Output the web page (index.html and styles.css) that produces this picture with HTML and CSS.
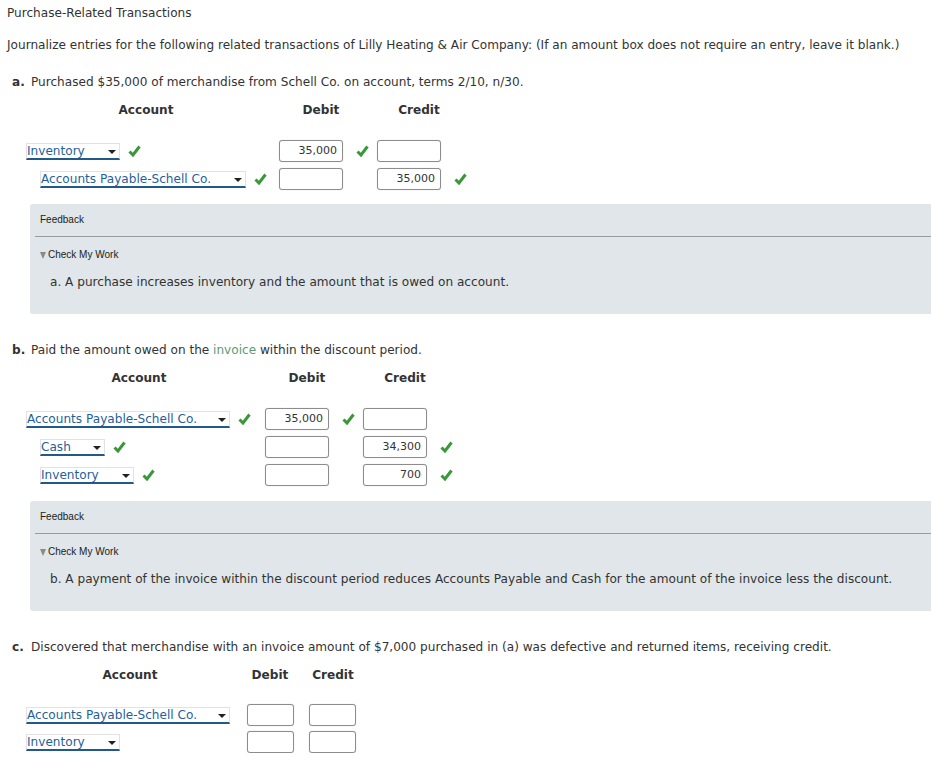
FILE: index.html
```html
<!DOCTYPE html>
<html>
<head>
<meta charset="utf-8">
<link rel="stylesheet" href="styles.css">
</head>
<body>
<div class="page">
  <div class="title">Purchase-Related Transactions</div>
  <div class="instr">Journalize entries for the following related transactions of Lilly Heating &amp; Air Company: (If an amount box does not require an entry, leave it blank.)</div>

  <!-- a -->
  <div class="question q-first"><b>a.</b><span>Purchased $35,000 of merchandise from Schell Co. on account, terms 2/10, n/30.</span></div>
  <div class="head head-a"><div>Account</div><div>Debit</div><div>Credit</div></div>
  <div class="entries entries-a">
    <div class="row">
      <div class="acct"><span class="sel w94">Inventory<i class="arr"></i></span><svg class="chk" viewBox="0 0 13 12"><path d="M1.5 6.5 L5 10 L11.5 1.5"/></svg></div>
      <div class="amt"><span class="box">35,000</span><svg class="chk" viewBox="0 0 13 12"><path d="M1.5 6.5 L5 10 L11.5 1.5"/></svg></div>
      <div class="amt"><span class="box"></span></div>
    </div>
    <div class="row">
      <div class="acct ind"><span class="sel w206">Accounts Payable-Schell Co.<i class="arr"></i></span><svg class="chk" viewBox="0 0 13 12"><path d="M1.5 6.5 L5 10 L11.5 1.5"/></svg></div>
      <div class="amt"><span class="box"></span></div>
      <div class="amt"><span class="box">35,000</span><svg class="chk" viewBox="0 0 13 12"><path d="M1.5 6.5 L5 10 L11.5 1.5"/></svg></div>
    </div>
  </div>
  <div class="feedback">
    <div class="fb-label">Feedback</div>
    <div class="fb-rule"></div>
    <div class="fb-check"><span class="tri"></span>Check My Work</div>
    <div class="fb-text">a. A purchase increases inventory and the amount that is owed on account.</div>
  </div>

  <!-- b -->
  <div class="question"><b>b.</b><span>Paid the amount owed on the <span class="link">invoice</span> within the discount period.</span></div>
  <div class="head head-b"><div>Account</div><div>Debit</div><div>Credit</div></div>
  <div class="entries entries-b">
    <div class="row">
      <div class="acct"><span class="sel w204">Accounts Payable-Schell Co.<i class="arr"></i></span><svg class="chk" viewBox="0 0 13 12"><path d="M1.5 6.5 L5 10 L11.5 1.5"/></svg></div>
      <div class="amt"><span class="box">35,000</span><svg class="chk" viewBox="0 0 13 12"><path d="M1.5 6.5 L5 10 L11.5 1.5"/></svg></div>
      <div class="amt"><span class="box"></span></div>
    </div>
    <div class="row">
      <div class="acct ind"><span class="sel w65">Cash<i class="arr"></i></span><svg class="chk" viewBox="0 0 13 12"><path d="M1.5 6.5 L5 10 L11.5 1.5"/></svg></div>
      <div class="amt"><span class="box"></span></div>
      <div class="amt"><span class="box">34,300</span><svg class="chk" viewBox="0 0 13 12"><path d="M1.5 6.5 L5 10 L11.5 1.5"/></svg></div>
    </div>
    <div class="row">
      <div class="acct ind"><span class="sel w94">Inventory<i class="arr"></i></span><svg class="chk" viewBox="0 0 13 12"><path d="M1.5 6.5 L5 10 L11.5 1.5"/></svg></div>
      <div class="amt"><span class="box"></span></div>
      <div class="amt"><span class="box">700</span><svg class="chk" viewBox="0 0 13 12"><path d="M1.5 6.5 L5 10 L11.5 1.5"/></svg></div>
    </div>
  </div>
  <div class="feedback fb-b">
    <div class="fb-label">Feedback</div>
    <div class="fb-rule"></div>
    <div class="fb-check"><span class="tri"></span>Check My Work</div>
    <div class="fb-text">b. A payment of the invoice within the discount period reduces Accounts Payable and Cash for the amount of the invoice less the discount.</div>
  </div>

  <!-- c -->
  <div class="question"><b>c.</b><span>Discovered that merchandise with an invoice amount of $7,000 purchased in (a) was defective and returned items, receiving credit.</span></div>
  <div class="head head-c"><div>Account</div><div>Debit</div><div>Credit</div></div>
  <div class="entries entries-c">
    <div class="row">
      <div class="acct"><span class="sel w204">Accounts Payable-Schell Co.<i class="arr"></i></span></div>
      <div class="amt"><span class="box"></span></div>
      <div class="amt"><span class="box"></span></div>
    </div>
    <div class="row">
      <div class="acct"><span class="sel w94">Inventory<i class="arr"></i></span></div>
      <div class="amt"><span class="box"></span></div>
      <div class="amt"><span class="box"></span></div>
    </div>
  </div>
</div>
</body>
</html>
```

FILE: styles.css
```css
* { box-sizing: border-box; }
html, body { margin: 0; padding: 0; background: #fff; }
body {
  font-family: Verdana, "DejaVu Sans", sans-serif;
  font-size: 12.1px;
  color: #333;
  line-height: 16px;
}
.page { padding: 5px 0 0 7px; }
.title { height: 16px; }
.instr { margin-top: 16px; white-space: nowrap; }
.question { margin-top: 28px; padding-left: 5px; display: flex; white-space: nowrap; }
.question.q-first { margin-top: 21px; }
.question b { font-weight: bold; width: 19px; }
.link { color: #5c9a74; }

.head { display: grid; margin-top: 12px; font-weight: bold; text-align: center; margin-left: 19px; }
.head-a { grid-template-columns: 240px 110px 86px; }
.head-b { grid-template-columns: 226px 110px 86px; }
.head-c { grid-template-columns: 208px 72px 54px; }

.entries { margin-left: 19px; margin-top: 22px; display: flex; flex-direction: column; gap: 6px; }
.entries-c { margin-top: 21px; gap: 5px; }
.row { display: grid; height: 22px; align-items: center; }
.entries-a .row { grid-template-columns: 253px 98px 100px; }
.entries-b .row { grid-template-columns: 239px 98px 100px; }
.entries-c .row { grid-template-columns: 221px 62px 60px; }

.acct { display: flex; align-items: center; gap: 8px; }
.acct.ind { padding-left: 14px; }
.amt { display: flex; align-items: center; gap: 13px; }

.sel {
  position: relative;
  display: inline-block;
  height: 17px;
  line-height: 15px;
  color: #1f5f9c;
  background: #fff;
  border: 1px solid #e2e2e2;
  border-bottom: 2px solid #215a8a;
  padding-left: 0;
  white-space: nowrap;
  margin-top: 1px;
}
.w94 { width: 94px; }
.w65 { width: 65px; }
.w204 { width: 204px; }
.w206 { width: 206px; }
.arr {
  position: absolute;
  right: 3px;
  top: 6px;
  width: 0; height: 0;
  border-left: 4px solid transparent;
  border-right: 4px solid transparent;
  border-top: 4px solid #222;
}

.chk { width: 13px; height: 12px; flex: none; }
.chk path { fill: none; stroke: #3a983a; stroke-width: 3; stroke-linecap: butt; stroke-linejoin: miter; }

.box {
  display: block;
  width: 64px;
  height: 22px;
  border: 1px solid #8c8c8c;
  border-radius: 3px;
  box-shadow: 0 0 1px rgba(0,0,0,0.25);
  background: #fff;
  text-align: right;
  padding-right: 5px;
  font-size: 11px;
  line-height: 20px;
  color: #333;
}
.entries-c .box { width: 47px; }

.feedback {
  margin-top: 14px;
  margin-left: 23px;
  background: #e0e6e9;
  border-radius: 3px 0 0 3px;
  padding: 10px 0 22px 0;
  height: 110px;
}
.fb-b { margin-top: 15px; }
.fb-label { font-family: "Liberation Sans", Arial, sans-serif; font-size: 10px; line-height: 12px; padding-left: 10px; color: #222; }
.fb-rule { margin: 10px 0 0 5px; height: 1px; background: #979c9e; }
.fb-check { margin-top: 12px; font-family: "Liberation Sans", Arial, sans-serif; font-size: 10px; line-height: 12px; padding-left: 10px; color: #222; display: flex; align-items: center; }
.tri {
  width: 0; height: 0;
  border-left: 3px solid transparent;
  border-right: 3px solid transparent;
  border-top: 7px solid #8a8a8a;
  margin-right: 2px;
}
.fb-text { margin-top: 13px; padding-left: 20px; color: #333; white-space: nowrap; }
```
